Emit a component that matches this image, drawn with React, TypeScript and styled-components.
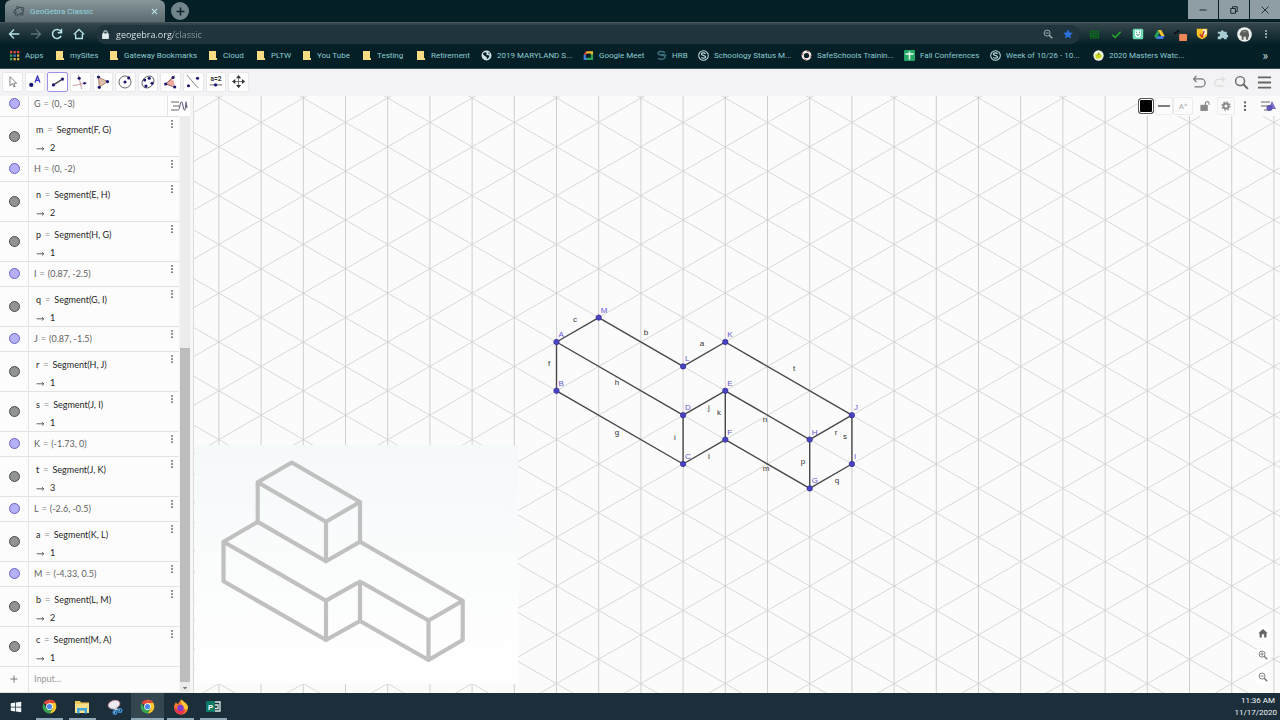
import React from "react";
import styled, { createGlobalStyle } from "styled-components";

const GlobalStyle = createGlobalStyle`
  *, *::before, *::after { box-sizing: border-box; }
  body { margin: 0; font-family: Roboto, "Noto Sans", sans-serif; background: #fbfbfb; }
  button, input { font: inherit; color: inherit; border: 0; padding: 0; margin: 0; background: none; }
  ul { list-style: none; margin: 0; padding: 0; }
  a { color: inherit; text-decoration: none; }
  svg { display: block; flex: none; }
`;

const ink = {
  chrome: "#041f26",
  cyan: "#8fcbd3",
  purple: "#6557d2",
  grey: "#666666",
};

const Page = styled.div`
  display: flex;
  flex-direction: column;
  height: 100vh;
  overflow: hidden;
`;

/* ---------- browser frame ---------- */

const TitleBar = styled.header`
  display: flex;
  align-items: flex-end;
  height: 22px;
  padding-left: 5px;
  background: ${ink.chrome};
`;

const BrowserTab = styled.div`
  display: flex;
  align-items: center;
  gap: 5px;
  width: 160px;
  height: 22px;
  padding: 0 7px 0 8px;
  border-radius: 6px 6px 0 0;
  background: linear-gradient(#88979a, #5b6a6f);
  color: #8fd5e0;
  font-size: 8px;
`;

const TabTitle = styled.span`
  flex: 1;
`;

const PlainButton = styled.button`
  display: grid;
  place-items: center;
`;

const NewTab = styled(PlainButton)`
  align-self: center;
  width: 18px;
  height: 18px;
  margin-left: 6px;
  border-radius: 50%;
  background: #72858a;
`;

const WindowControls = styled.div`
  display: flex;
  align-self: flex-start;
  gap: 1px;
  margin-left: auto;
`;

const WindowButton = styled(PlainButton)`
  width: 30px;
  height: 19px;
  background: #8f9ea2;
`;

const NavBar = styled.nav`
  display: flex;
  align-items: center;
  height: 23px;
  padding: 0 3px;
  border-top: 1px solid #46575d;
  background: linear-gradient(#35464c, ${ink.chrome});
`;

const NavButtons = styled.div<{ $width: number }>`
  display: grid;
  grid-auto-flow: column;
  grid-auto-columns: 1fr;
  width: ${(p) => p.$width}px;
`;

const Omnibox = styled.div`
  display: flex;
  flex: 1;
  align-items: center;
  gap: 6px;
  height: 19px;
  margin: 0 4px 0 6px;
  padding: 0 7px 0 5px;
  border-radius: 10px;
  background: #1f343c;
`;

const Address = styled.input`
  flex: 1;
  min-width: 0;
  outline: 0;
  font-family: "Open Sans", "Noto Sans", sans-serif;
  font-size: 9px;
  background: linear-gradient(90deg, #e8f1f3 57px, #8b9da2 57px);
  background-clip: text;
  color: transparent;
`;

const OmniIcons = styled.div`
  display: flex;
  gap: 10px;
`;

const Bookmarks = styled.ul`
  display: flex;
  align-items: center;
  height: 24px;
  padding: 0 12px 2px 9px;
  border-bottom: 1px solid #3a4d53;
  background: ${ink.chrome};
  color: ${ink.cyan};
  font-size: 8px;
`;

const BookmarkItem = styled.li<{ $width: number }>`
  width: ${(p) => p.$width}px;
  white-space: nowrap;
`;

const BookmarkLink = styled.a`
  display: flex;
  align-items: center;
  gap: 5px;
`;

const OverflowItem = styled.li`
  margin-left: auto;
  color: #c8dadd;
  font-size: 12px;
  line-height: 16px;
`;

/* ---------- GeoGebra toolbar ---------- */

const ToolBar = styled.div`
  display: flex;
  align-items: center;
  height: 27px;
  padding: 0 8px 1px 2px;
  background: #f3f2f4;
`;

const Tools = styled.div`
  display: grid;
  grid-template-columns: repeat(11, 1fr);
  gap: 2px;
  width: 247px;
`;

const Tool = styled(PlainButton)<{ $active?: boolean }>`
  height: 20px;
  border: 1px solid ${(p) => (p.$active ? "#9a92e6" : "#e8e8ea")};
  border-radius: 2px;
  background: #fff;
`;

const ToolActions = styled.div`
  display: flex;
  align-items: center;
  gap: 8px;
  margin-left: auto;
`;

/* ---------- algebra view ---------- */

const Workspace = styled.main`
  display: flex;
  flex: 1;
  min-height: 0;
`;

const Sidebar = styled.aside`
  position: relative;
  display: flex;
  width: 194px;
  flex: none;
  border-right: 1px solid #dcdcdc;
  background: #f6f6f6;
`;

const AlgebraList = styled.ul`
  display: flex;
  flex: 1;
  flex-direction: column;
  justify-content: flex-end;
  overflow: hidden;
  background: #fcfcfc;
  font-family: Lato, sans-serif;
`;

const Row = styled.li<{ $tall?: boolean }>`
  display: grid;
  grid-template-columns: 29px 1fr 14px;
  flex: none;
  height: ${(p) => (p.$tall ? 40 : 25)}px;
  border-bottom: 1px solid #e2e2e2;
`;

const InputRow = styled(Row)`
  height: 26px;
  align-items: center;
`;

const MarbleCell = styled.div`
  display: grid;
  place-items: center;
  align-self: stretch;
  padding-bottom: 2px;
  border-right: 1px solid #e4e4e4;
  color: ${ink.grey};
`;

const Marble = styled.button<{ $point?: boolean }>`
  width: 11px;
  height: 11px;
  border: 1px solid ${(p) => (p.$point ? "#6c62c4" : "#4c4c4c")};
  border-radius: 50%;
  background: ${(p) => (p.$point ? "#b5b0f8" : "#929494")};
`;

const PointText = styled.div`
  padding-left: 5px;
  color: #626262;
  font-size: 9px;
  line-height: 24px;
`;

const SegmentText = styled.div`
  padding: 4px 0 0 7px;
  color: #262626;
  font-size: 9px;
  line-height: 18px;
`;

const Line = styled.div<{ $gap: number }>`
  display: flex;
  align-items: center;
  gap: ${(p) => p.$gap}px;
`;

const Equals = styled.span`
  color: #808080;
`;

const MoreButton = styled(PlainButton)`
  place-items: start center;
  padding-top: 2px;
`;

const Entry = styled.input`
  min-width: 0;
  padding: 0 0 2px 5px;
  outline: 0;
  font-size: 9px;
  &::placeholder { color: #999; opacity: 1; }
`;

const ScrollTrack = styled.div`
  display: flex;
  flex-direction: column;
  width: 10px;
  margin: 20px 3px 0 1px;
  background: #ececec;
`;

const ScrollSpace = styled.div`
  flex: 232;
`;

const ScrollThumb = styled.div`
  flex: 334;
  background: #bdbdbd;
`;

const ScrollArrow = styled(PlainButton)`
  height: 11px;
`;

const ViewToggle = styled(PlainButton)`
  position: absolute;
  top: 0;
  right: 3px;
  width: 23px;
  height: 20px;
  border-left: 1px solid #e4e4e4;
  background: #fff;
`;

/* ---------- graphics view ---------- */

const Graphics = styled.section`
  position: relative;
  flex: 1;
  min-width: 0;
  overflow: hidden;
  background: #fbfbfb;
`;

const Plane = styled.svg`
  position: absolute;
  inset: 0;
  width: 100%;
  height: 100%;
  font-family: "Liberation Sans", Arial, sans-serif;
  font-size: 8px;
`;

const Sheet = styled.figure`
  position: absolute;
  left: 1px;
  bottom: 9px;
  width: 323px;
  height: 239px;
  margin: 0;
  background: linear-gradient(#f5f9fa, #fefefe 85%);
`;

const StyleBar = styled.div`
  position: absolute;
  top: 0;
  right: 0;
  display: flex;
  align-items: center;
  height: 20px;
  background: #fbfbfb;
`;

const StyleButton = styled(PlainButton)<{ $width: number; $boxed?: boolean }>`
  width: ${(p) => p.$width}px;
  height: 18px;
  border: ${(p) => (p.$boxed ? "1px solid #ececec" : "0")};
  border-radius: 2px;
  color: #aaa;
  font-size: 8px;
`;

const Swatch = styled.span`
  width: 16px;
  height: 16px;
  border: 1px solid #555;
  border-radius: 3px;
  background: #000;
  box-shadow: inset 0 0 0 1px #fff;
`;

const ZoomButtons = styled.div`
  position: absolute;
  right: 9px;
  bottom: 8px;
  display: flex;
  flex-direction: column;
  gap: 6px;
`;

const RoundButton = styled(PlainButton)`
  width: 16px;
  height: 16px;
  border-radius: 50%;
  background: #fff;
`;

/* ---------- Windows task bar ---------- */

const TaskBar = styled.footer`
  display: flex;
  align-items: stretch;
  height: 27px;
  flex: none;
  background: #1b2e3a;
`;

const TaskButtons = styled.div`
  display: grid;
  grid-template-columns: repeat(7, 1fr);
  width: 230px;
`;

const TaskButton = styled(PlainButton)<{ $open?: boolean; $active?: boolean }>`
  position: relative;
  background: ${(p) => (p.$active ? "#34464f" : "transparent")};
  &::after {
    content: "";
    position: absolute;
    left: ${(p) => (p.$active ? 0 : 3)}px;
    right: ${(p) => (p.$active ? 0 : 3)}px;
    bottom: 0;
    height: 2px;
    background: ${(p) => (p.$open ? "#8fa9b8" : "transparent")};
  }
`;

const Clock = styled.time`
  display: flex;
  flex-direction: column;
  justify-content: center;
  align-items: flex-end;
  margin-left: auto;
  padding-right: 3px;
  color: #f4f7f8;
  font-size: 8px;
  line-height: 12px;
`;

const ClockTime = styled.span`
  padding-right: 2px;
`;

/* ---------- icons ---------- */

type GlyphProps = {
  size?: number;
  box?: number;
  color?: string;
  stroke?: number;
  children: React.ReactNode;
};

const Glyph = ({ size = 12, box = 16, color = "currentColor", stroke = 1.5, children }: GlyphProps) => (
  <svg width={size} height={size} viewBox={`0 0 ${box} ${box}`} fill="none" stroke={color} strokeWidth={stroke} aria-hidden="true">
    {children}
  </svg>
);

const Dots = ({ color = "#777", size = 12 }: { color?: string; size?: number }) => (
  <Glyph size={size}>
    <g fill={color} stroke="none">
      <rect x="6.5" y="1.5" width="3" height="3" rx="1" />
      <rect x="6.5" y="6.5" width="3" height="3" rx="1" />
      <rect x="6.5" y="11.5" width="3" height="3" rx="1" />
    </g>
  </Glyph>
);

const Lens = ({ color, size = 11, sign }: { color: string; size?: number; sign: "plus" | "minus" | "none" }) => (
  <Glyph size={size} color={color}>
    <circle cx="6.5" cy="6.5" r="4.8" />
    <path d="M10 10l4.8 4.8" strokeWidth="2.2" />
    {sign !== "none" && <path d={sign === "plus" ? "M4 6.5h5M6.5 4v5" : "M4 6.5h5"} />}
  </Glyph>
);

const Folder = () => (
  <svg width="10" height="11" viewBox="0 0 10 11" aria-hidden="true">
    <path d="M1 1h7v7h1v2H1z" fill="#f8dc83" />
  </svg>
);

const AppsGrid = () => (
  <svg width="11" height="11" viewBox="0 0 11 11" aria-hidden="true">
    {["#d8503c", "#d8503c", "#d8503c", "#3fa05a", "#3f7fd0", "#d8a53c", "#3fa05a", "#e0b040", "#e0b040"].map((c, i) => (
      <rect key={i} x={1 + (i % 3) * 3.5} y={1 + Math.floor(i / 3) * 3.5} width="2.3" height="2.3" fill={c} />
    ))}
  </svg>
);

const GlobeIcon = () => (
  <svg width="11" height="11" viewBox="0 0 16 16" aria-hidden="true">
    <circle cx="8" cy="8" r="7.2" fill="#cfe0e3" />
    <path d="M3 5c2-2 4-2 5-1s-1 2 0 3 3 0 4 1-1 4-3 5c-1-1 0-2-1-3S3 8 3 5zM11 3l2 2-2 1z" fill={ink.chrome} />
  </svg>
);

const MeetIcon = () => (
  <svg width="11" height="11" viewBox="0 0 16 16" fill="none" strokeWidth="3.2" aria-hidden="true">
    <path d="M2.5 6.5V13H6" stroke="#3f7fe0" />
    <path d="M2.5 6.500L6 3" stroke="#e0483c" />
    <path d="M5 3.500h8V7" stroke="#eebb30" />
    <path d="M5.500 13H13V6.500" stroke="#2ca352" />
  </svg>
);

const HrbIcon = () => (
  <Glyph size={11} color="#3f7080" stroke={2}>
    <path d="M13 4C10 1 3 2 3 5s9 2 10 5-6 5-10 2M6 7c4-1 8 0 9 2" />
  </Glyph>
);

const SchoologyIcon = () => (
  <Glyph size={11} color="#c6dde0" stroke={1.5}>
    <circle cx="8" cy="8" r="7" />
    <path d="M11 5.500C9.500 3.500 5 3.800 5 6s6 1.800 6 4-4.500 2.500-6 .6" strokeWidth="1.8" />
  </Glyph>
);

const SafeIcon = () => (
  <svg width="11" height="11" viewBox="0 0 16 16" fill="none" aria-hidden="true">
    <circle cx="8" cy="8" r="5.5" stroke="#f4e9e6" strokeWidth="3.4" />
    <circle cx="8" cy="8" r="6" stroke="#a0493f" strokeWidth="1.4" strokeDasharray="3 6.4" />
  </svg>
);

const SheetsIcon = () => (
  <svg width="11" height="11" viewBox="0 0 11 11" aria-hidden="true">
    <rect width="11" height="11" rx="1" fill="#22a565" />
    <path d="M5.5 1.5v8M1.5 4h8" stroke="#e9fff2" strokeWidth="1.6" />
  </svg>
);

const MastersIcon = () => (
  <svg width="11" height="11" viewBox="0 0 16 16" aria-hidden="true">
    <circle cx="8" cy="8" r="7.5" fill="#f2f4e8" />
    <path d="M3 7l4-2 5 1 1 4-5 3-4-1z" fill="#c9d81e" />
    <path d="M8 3l2 3-3 2z" fill="#7b8f2b" />
  </svg>
);

const bookmarks: { label: string; width: number; icon: React.ReactNode }[] = [
  { label: "Apps", width: 46, icon: <AppsGrid /> },
  { label: "mySites", width: 54, icon: <Folder /> },
  { label: "Gateway Bookmarks", width: 99, icon: <Folder /> },
  { label: "Cloud", width: 48, icon: <Folder /> },
  { label: "PLTW", width: 46, icon: <Folder /> },
  { label: "You Tube", width: 60, icon: <Folder /> },
  { label: "Testing", width: 54, icon: <Folder /> },
  { label: "Retirement", width: 65, icon: <Folder /> },
  { label: "2019 MARYLAND S...", width: 102, icon: <GlobeIcon /> },
  { label: "Google Meet", width: 73, icon: <MeetIcon /> },
  { label: "HRB", width: 42, icon: <HrbIcon /> },
  { label: "Schoology Status M...", width: 103, icon: <SchoologyIcon /> },
  { label: "SafeSchools Trainin...", width: 103, icon: <SafeIcon /> },
  { label: "Fall Conferences", width: 86, icon: <SheetsIcon /> },
  { label: "Week of 10/26 - 10...", width: 103, icon: <SchoologyIcon /> },
  { label: "2020 Masters Watc...", width: 110, icon: <MastersIcon /> },
];

const Dot = ({ x, y, r = 1.9 }: { x: number; y: number; r?: number }) => (
  <circle cx={x} cy={y} r={r} fill="#1a1670" stroke="none" />
);

const tools: { name: string; art: React.ReactNode }[] = [
  { name: "Move", art: <path d="M6 2v11l3-2.5 1.8 4 1.5-.7-1.7-3.8h3.6z" stroke="#777" strokeWidth="1.1" /> },
  {
    name: "Point",
    art: (
      <>
        <Dot x={4} y={12} r={2.6} />
        <path d="M8.5 9L11.5 1.5 14.5 9M9.5 6.500h4" stroke="#3a37c8" strokeWidth="1.7" />
      </>
    ),
  },
  { name: "Segment", art: <><path d="M3 12L14 5" stroke="#444" /><Dot x={3} y={12} /><Dot x={14} y={5} /></> },
  {
    name: "Perpendicular line",
    art: (
      <>
        <path d="M0 13L17 9.500M6.500 0l4 17" stroke="#c79a98" strokeWidth="1.2" />
        <Dot x={7.5} y={4} />
        <Dot x={14} y={10} r={1.5} />
      </>
    ),
  },
  {
    name: "Polygon",
    art: (
      <>
        <path d="M3 2.5L14 8 4 15z" fill="#dcc0ae" stroke="#a8705c" strokeWidth="1" />
        <Dot x={3} y={2.5} /><Dot x={14} y={8} /><Dot x={4} y={15} />
      </>
    ),
  },
  { name: "Circle", art: <><circle cx="8.500" cy="8.500" r="7.300" stroke="#555" strokeWidth="1.1" /><Dot x={8.5} y={8.5} /><Dot x={13} y={3.500} /></> },
  {
    name: "Ellipse",
    art: (
      <>
        <ellipse cx="8.500" cy="8.500" rx="8" ry="6.400" transform="rotate(-45 8.500 8.500)" stroke="#555" strokeWidth="1.1" />
        <Dot x={4.5} y={6} /><Dot x={10} y={4} /><Dot x={6} y={13.500} /><Dot x={13.5} y={10} />
      </>
    ),
  },
  {
    name: "Angle",
    art: (
      <>
        <path d="M2 11L9 4a10 10 0 0 1 3.500 9.500z" fill="#eda99b" stroke="none" />
        <path d="M13 1L2 11l12 4" stroke="#7a4a4a" strokeWidth="1.1" />
        <Dot x={11} y={3} /><Dot x={2} y={11} /><Dot x={13} y={14.5} />
      </>
    ),
  },
  { name: "Reflect about line", art: <><path d="M1 0l14 16" stroke="#777" strokeWidth="1.1" /><Dot x={3} y={13} /><Dot x={14} y={4} /></> },
  {
    name: "Slider",
    art: (
      <>
        <path d="M1 12h15" stroke="#666" strokeWidth="1.2" />
        <Dot x={8} y={12} />
        <text x="8.5" y="7" textAnchor="middle" fontSize="8" fontWeight="700" fill="#333" stroke="none">a=2</text>
      </>
    ),
  },
  {
    name: "Move graphics view",
    art: (
      <>
        <path d="M8 2v12M2 8h12" stroke="#666" strokeWidth="1.1" />
        <path d="M8 0l3 4H5zM8 16l3-4H5zM0 8l4-3v6zM16 8l-4-3v6z" fill="#333" stroke="none" />
      </>
    ),
  },
];

/* ---------- construction data ---------- */

type AlgebraRow = { name: string; value: string; result?: string };

const algebra: AlgebraRow[] = [
  { name: "G", value: "(0, -3)" },
  { name: "m", value: "Segment(F, G)", result: "2" },
  { name: "H", value: "(0, -2)" },
  { name: "n", value: "Segment(E, H)", result: "2" },
  { name: "p", value: "Segment(H, G)", result: "1" },
  { name: "I", value: "(0.87, -2.5)" },
  { name: "q", value: "Segment(G, I)", result: "1" },
  { name: "J", value: "(0.87, -1.5)" },
  { name: "r", value: "Segment(H, J)", result: "1" },
  { name: "s", value: "Segment(J, I)", result: "1" },
  { name: "K", value: "(-1.73, 0)" },
  { name: "t", value: "Segment(J, K)", result: "3" },
  { name: "L", value: "(-2.6, -0.5)" },
  { name: "a", value: "Segment(K, L)", result: "1" },
  { name: "M", value: "(-4.33, 0.5)" },
  { name: "b", value: "Segment(L, M)", result: "2" },
  { name: "c", value: "Segment(M, A)", result: "1" },
];

const UNIT = 48.8;
const COLUMN = 42.2;
const ORIGIN = { x: 615.7, y: 246 };

// Points are stored as [grid column, height in units].
const points: Record<string, [number, number]> = {
  A: [-6, 0], B: [-6, -1], C: [-3, -2.5], D: [-3, -1.5], E: [-2, -1], F: [-2, -2],
  G: [0, -3], H: [0, -2], I: [1, -2.5], J: [1, -1.5], K: [-2, 0], L: [-3, -0.5], M: [-5, 0.5],
};

// [label, start, end, label x, label y]
const segments: [string, string, string, number, number][] = [
  ["c", "M", "A", 381, 226], ["b", "L", "M", 452, 239], ["a", "K", "L", 508, 250], ["t", "J", "K", 600, 275],
  ["f", "A", "B", 355, 270], ["h", "A", "D", 423, 289], ["g", "B", "C", 423, 339], ["i", "D", "C", 481, 344],
  ["j", "D", "E", 515, 314], ["k", "E", "F", 525, 319], ["l", "C", "F", 515, 363], ["n", "E", "H", 571, 326],
  ["m", "F", "G", 572, 375], ["p", "H", "G", 609, 368], ["q", "G", "I", 643, 387], ["r", "H", "J", 642, 339],
  ["s", "J", "I", 651, 343],
];

const at = (id: string) => ({
  x: ORIGIN.x + points[id][0] * COLUMN,
  y: ORIGIN.y - points[id][1] * UNIT,
});

const columns = Array.from({ length: 62 }, (_, i) => i - 15);
const diagonals = Array.from({ length: 80 }, (_, i) => i - 35);
const reach = 50;

const verticalPath = columns.map((c) => `M${ORIGIN.x + c * COLUMN} 0V2000`).join("");

const diagonalPath = diagonals
  .map((d) => {
    const y = ORIGIN.y + d * UNIT;
    const x1 = ORIGIN.x - 16 * COLUMN;
    const x2 = ORIGIN.x + reach * COLUMN;
    return (
      `M${x1} ${y - 8 * UNIT}L${x2} ${y + (reach / 2) * UNIT}` +
      `M${x1} ${y + 8 * UNIT}L${x2} ${y - (reach / 2) * UNIT}`
    );
  })
  .join("");

const GeoPlane = () => (
  <Plane role="img" aria-label="Isometric construction">
    <path d={diagonalPath} stroke="#d8d8d8" strokeWidth="1" fill="none" />
    <path d={verticalPath} stroke="#cfcfcf" strokeWidth="1" fill="none" />
    {segments.map(([id, a, b]) => (
      <line key={id} x1={at(a).x} y1={at(a).y} x2={at(b).x} y2={at(b).y} stroke="#4a4a4a" strokeWidth="1.4" />
    ))}
    {Object.keys(points).map((id) => (
      <g key={id}>
        <circle cx={at(id).x} cy={at(id).y} r="2.7" fill="#4a43c4" stroke="#2f2a8c" strokeWidth="0.7" />
        <text x={at(id).x + 2} y={at(id).y - 5} fill={ink.purple}>{id}</text>
      </g>
    ))}
    {segments.map(([id, , , x, y]) => (
      <text key={id} x={x} y={y} textAnchor="middle" fill="#333">{id}</text>
    ))}
  </Plane>
);

const BlockDrawing = () => (
  <svg width="323" height="239" viewBox="195 445 323 239" fill="none" stroke="#c0c0c0" strokeWidth="4.2" strokeLinejoin="round" strokeLinecap="round" role="img" aria-label="Target solid">
    <path d="M257.7 482.3L291.7 462.5 360 502 326 521.7zM257.7 482.3V521.9L326 561.3V521.7M326 561.3L360 541.7V502" />
    <path d="M257.7 521.9L223.5 541.7V581.3L326 640V600.7L223.5 541.7M326 600.7L360 581.5 428.5 620.5 462.7 600.8 360 541.7M326 640L360 621V581.5M360 621L428.5 660V620.5M428.5 660L462.7 640V600.8" />
  </svg>
);

/* ---------- larger pieces ---------- */

const ChromeLogo = () => (
  <svg width="15" height="15" viewBox="0 0 24 24" aria-hidden="true">
    <path d="M12 12L2.5 6.5A11 11 0 0 1 21.5 6.5z" fill="#e2453a" />
    <path d="M12 12V1a11 11 0 0 1 9.5 5.5A11 11 0 0 1 12 23l5-8z" fill="#f7c72c" />
    <path d="M12 1A11 11 0 0 1 21.5 6.5H12z" fill="#e2453a" />
    <path d="M12 12l5 3-5 8A11 11 0 0 1 2.5 6.5L7 15z" fill="#36a552" />
    <circle cx="12" cy="12" r="5.4" fill="#fff" />
    <circle cx="12" cy="12" r="4.2" fill="#4a86ee" />
  </svg>
);

const BrowserFrame = () => (
  <>
    <TitleBar>
      <BrowserTab>
        <Glyph size={12} color="#34444a" stroke={1.2}>
          <ellipse cx="8" cy="8" rx="6" ry="4.5" transform="rotate(-20 8 8)" />
          <g fill="#78878b">
            <circle cx="2.5" cy="9" r="1.6" /><circle cx="6" cy="3.5" r="1.6" /><circle cx="13" cy="5" r="1.6" />
            <circle cx="12" cy="12" r="1.6" /><circle cx="5" cy="13" r="1.6" />
          </g>
        </Glyph>
        <TabTitle>GeoGebra Classic</TabTitle>
        <PlainButton aria-label="Close tab">
          <Glyph size={7} color="#bfe6ea" stroke={2.4}><path d="M2 2l12 12M14 2L2 14" /></Glyph>
        </PlainButton>
      </BrowserTab>
      <NewTab aria-label="New tab">
        <Glyph size={9} color="#0b2228" stroke={2.6}><path d="M8 1v14M1 8h14" /></Glyph>
      </NewTab>
      <WindowControls>
        <WindowButton aria-label="Minimize"><Glyph size={8} color="#1b2a2f" stroke={2}><path d="M1 8h14" /></Glyph></WindowButton>
        <WindowButton aria-label="Restore"><Glyph size={8} color="#1b2a2f" stroke={2}><path d="M1.5 5h9.5v9.5H1.5zM5 5V1.5h9.5V11H11" /></Glyph></WindowButton>
        <WindowButton aria-label="Close window"><Glyph size={8} color="#1b2a2f" stroke={1.8}><path d="M1 1l14 14M15 1L1 15" /></Glyph></WindowButton>
      </WindowControls>
    </TitleBar>

    <NavBar>
      <NavButtons $width={87}>
        <PlainButton aria-label="Back"><Glyph size={12} color="#b4e2e8" stroke={1.8}><path d="M15 8H2.5M8 2L2 8l6 6" /></Glyph></PlainButton>
        <PlainButton aria-label="Forward"><Glyph size={12} color="#5b7077" stroke={1.8}><path d="M1 8h12.5M8 2l6 6-6 6" /></Glyph></PlainButton>
        <PlainButton aria-label="Reload"><Glyph size={12} color="#b4e2e8" stroke={2}><path d="M13.5 10.5A6 6 0 1 1 12.5 4L14 6M14 1v5.3H9" /></Glyph></PlainButton>
        <PlainButton aria-label="Home"><Glyph size={12} color="#b4e2e8" stroke={1.8}><path d="M1 8.5L8 2l7 6.5M3.5 7.5V14h9V7.5" /></Glyph></PlainButton>
      </NavButtons>
      <Omnibox>
        <Glyph size={9} color="#e2ecee" stroke={1.8}>
          <rect x="3" y="7" width="10" height="8" fill="#e2ecee" /><path d="M5 7V4.5a3 3 0 0 1 6 0V7" />
        </Glyph>
        <Address aria-label="Address" defaultValue="geogebra.org/classic" />
        <OmniIcons>
          <PlainButton aria-label="Zoom"><Lens color="#9fb2b6" sign="minus" size={10} /></PlainButton>
          <PlainButton aria-label="Bookmark this page">
            <Glyph size={10}><path d="M8 .5l2.3 5 5.4.6-4 3.7 1.1 5.400L8 12.5l-4.800 2.7 1.1-5.400-4-3.7 5.400-.6z" fill="#2a72e0" stroke="none" /></Glyph>
          </PlainButton>
        </OmniIcons>
      </Omnibox>
      <NavButtons $width={193}>
        <PlainButton aria-label="Sheet extension">
          <Glyph size={11} color="#0f6a1c" stroke={1.6}><path d="M2 3h12v10H2zM2 6.5h12M2 10h12M6 3v10M10 3v10" /></Glyph>
        </PlainButton>
        <PlainButton aria-label="Check extension"><Glyph size={11} color="#22b422" stroke={2}><path d="M2 8.5L6 12.5 14 4" /></Glyph></PlainButton>
        <PlainButton aria-label="Bitmoji extension">
          <Glyph size={12}>
            <rect x="1" y="1" width="14" height="14" rx="2" fill="#6fdcb4" stroke="none" />
            <path d="M4 3h8v7l-2 2.5H6L4 10z" fill="#f0fffa" stroke="none" />
            <path d="M6 8c1 2.5 3 2.5 4 0M6 5v1.5M10 5v1.5" stroke="#2f8a6c" strokeWidth="1.2" />
          </Glyph>
        </PlainButton>
        <PlainButton aria-label="Drive extension">
          <Glyph size={11}>
            <g stroke="none"><path d="M5.5 1.5L8 6 3 14.5.5 10z" fill="#27a35a" /><path d="M5.5 1.5h5l5 8.5h-5z" fill="#f4c430" /><path d="M5.5 10h10L13 14.5H3z" fill="#3d79e2" /></g>
          </Glyph>
        </PlainButton>
        <PlainButton aria-label="Pen extension">
          <Glyph size={14}><path d="M1 8l6-4" stroke="#0b0f10" strokeWidth="2" /><rect x="7" y="8" width="9" height="8" rx="1" fill="#ee8656" stroke="none" /></Glyph>
        </PlainButton>
        <PlainButton aria-label="Shield extension">
          <Glyph size={12}>
            <path d="M1 1h14v7c0 4-4 6-7 7-3-1-7-3-7-7z" fill="#f6c228" stroke="none" />
            <path d="M9 2h5v5l-4 4z" fill="#fff" stroke="none" /><path d="M5 8l3 4 3-8" stroke="#c0392b" strokeWidth="2" />
          </Glyph>
        </PlainButton>
        <PlainButton aria-label="Extensions">
          <Glyph size={12}>
            <path d="M1 5h4a2 2 0 1 1 4 0h4v3.5a2 2 0 1 1 0 4V15H9.5a2 2 0 1 0-4 0H1v-4a2 2 0 1 0 0-3.5z" fill="#a5cdd3" stroke="none" />
          </Glyph>
        </PlainButton>
        <PlainButton aria-label="Profile">
          <Glyph size={15}>
            <circle cx="8" cy="8" r="7.8" fill="#eef0ef" stroke="none" />
            <path d="M4 5c1-2 6-3 8-.5l1 4-1.5 5H9.5v-3H7v3H5V10L2.5 8z" fill="#5d5f5c" stroke="none" />
            <path d="M6 5h4" stroke="#8f9a93" strokeWidth="1.2" />
          </Glyph>
        </PlainButton>
        <PlainButton aria-label="Browser menu"><Dots color="#a9c2c6" size={10} /></PlainButton>
      </NavButtons>
    </NavBar>

    <Bookmarks>
      {bookmarks.map((b) => (
        <BookmarkItem key={b.label} $width={b.width}>
          <BookmarkLink href="#">{b.icon}{b.label}</BookmarkLink>
        </BookmarkItem>
      ))}
      <OverflowItem><PlainButton aria-label="More bookmarks">»</PlainButton></OverflowItem>
    </Bookmarks>
  </>
);

const AlgebraView = () => (
  <Sidebar>
    <AlgebraList>
      {algebra.map((row) => (
        <Row key={row.name} $tall={!!row.result}>
          <MarbleCell><Marble $point={!row.result} aria-label={`Show or hide ${row.name}`} /></MarbleCell>
          {row.result ? (
            <SegmentText>
              <Line $gap={4}><span>{row.name}</span><Equals>=</Equals><span>{row.value}</span></Line>
              <Line $gap={5}>
                <Glyph size={9} color="#555" stroke={1.6}><path d="M1 8.5h13M10.5 5.5L14 8.5l-3.5 3" /></Glyph>
                <span>{row.result}</span>
              </Line>
            </SegmentText>
          ) : (
            <PointText>
              <Line $gap={3}><span>{row.name}</span><Equals>=</Equals><span>{row.value}</span></Line>
            </PointText>
          )}
          <MoreButton aria-label={`Options for ${row.name}`}><Dots size={10} /></MoreButton>
        </Row>
      ))}
      <InputRow>
        <MarbleCell><Glyph size={8} color="#777" stroke={2}><path d="M8 1v14M1 8h14" /></Glyph></MarbleCell>
        <Entry aria-label="Algebra input" placeholder="Input..." />
      </InputRow>
    </AlgebraList>
    <ScrollTrack>
      <ScrollSpace />
      <ScrollThumb />
      <ScrollArrow aria-label="Scroll down"><Glyph size={6}><path d="M2 5h12l-6 7z" fill="#777" stroke="none" /></Glyph></ScrollArrow>
    </ScrollTrack>
    <ViewToggle aria-label="Algebra view settings">
      <svg width="17" height="12" viewBox="0 0 17 12" fill="none" stroke="#666" strokeWidth="1.2" aria-hidden="true">
        <path d="M0 2h8M2 6h6M0 10h8" /><path d="M8 9c1-2 1-7 2.500-7S12 10 13.500 10 14.500 4 15 1.500L16 8" stroke="#6a6a88" />
      </svg>
    </ViewToggle>
  </Sidebar>
);

const GraphicsView = () => (
  <Graphics>
    <GeoPlane />
    <Sheet><BlockDrawing /></Sheet>
    <StyleBar>
      <StyleButton $width={18} aria-label="Colour"><Swatch /></StyleButton>
      <StyleButton $width={18} $boxed aria-label="Line style"><Glyph size={12} color="#555" stroke={2}><path d="M0 8h16" /></Glyph></StyleButton>
      <StyleButton $width={20} $boxed aria-label="Label style">A^</StyleButton>
      <StyleButton $width={24} aria-label="Unlock">
        <Glyph size={10} color="#888" stroke={1.8}><rect x="1.5" y="7" width="10" height="8" fill="#888" /><path d="M8.5 7V4a3 3 0 0 1 6 0v2" /></Glyph>
      </StyleButton>
      <StyleButton $width={18} $boxed aria-label="Settings">
        <Glyph size={10} color="#888" stroke={3}><circle cx="8" cy="8" r="4" /><circle cx="8" cy="8" r="6.5" strokeDasharray="2.6 2.5" strokeWidth="2" /></Glyph>
      </StyleButton>
      <StyleButton $width={20} aria-label="More"><Dots color="#666" size={12} /></StyleButton>
      <StyleButton $width={25} aria-label="Style bar">
        <svg width="16" height="12" viewBox="0 0 16 12" aria-hidden="true">
          <path d="M1 2h9M1 6h9M4 10h6" stroke="#666" strokeWidth="1.2" />
          <path d="M12 1l4 8H8z" fill="#7a72c8" /><circle cx="9.5" cy="8" r="3" fill="#5e56b4" />
        </svg>
      </StyleButton>
    </StyleBar>
    <ZoomButtons>
      <RoundButton aria-label="Standard view">
        <Glyph size={10}><path d="M8 1.5L15.5 8.5H13.5V15H9.8V10H6.2V15H2.5V8.5H.5z" fill="#666" stroke="none" /></Glyph>
      </RoundButton>
      <RoundButton aria-label="Zoom in"><Lens color="#777" size={10} sign="plus" /></RoundButton>
      <RoundButton aria-label="Zoom out"><Lens color="#777" size={10} sign="minus" /></RoundButton>
    </ZoomButtons>
  </Graphics>
);

const WindowsTaskBar = () => (
  <TaskBar>
    <TaskButtons>
      <TaskButton aria-label="Start">
        <Glyph size={12}><path d="M1 3l6-1v5.5H1zM8 1.9L15 1v6.5H8zM1 8.5h6V14l-6-1zM8 8.5h7V15l-7-.9z" fill="#f2f6f8" stroke="none" /></Glyph>
      </TaskButton>
      <TaskButton $open aria-label="Chrome"><ChromeLogo /></TaskButton>
      <TaskButton $open aria-label="File Explorer">
        <Glyph size={16}>
          <g stroke="none"><path d="M1 2h5l1 1.5h8V14H1z" fill="#efc85a" /><path d="M1 5h14v9H1z" fill="#fbe08c" /><path d="M3 9h10v5.5h-2.5v-3h-5v3H3z" fill="#3fa9dd" /></g>
        </Glyph>
      </TaskButton>
      <TaskButton aria-label="Snipping Tool">
        <Glyph size={16}>
          <ellipse cx="7" cy="5.5" rx="6" ry="4" transform="rotate(-18 7 5.5)" fill="#eceaf0" stroke="#c98b94" strokeWidth="0.8" />
          <path d="M4 9l9 2M10 7l-3 7" stroke="#c9d4da" strokeWidth="1.3" />
          <circle cx="13" cy="11.5" r="1.8" stroke="#3b8ad0" /><circle cx="8" cy="13.5" r="1.8" stroke="#3b8ad0" />
        </Glyph>
      </TaskButton>
      <TaskButton $open $active aria-label="Chrome, GeoGebra Classic"><ChromeLogo /></TaskButton>
      <TaskButton $open aria-label="Firefox">
        <Glyph size={16}>
          <g stroke="none">
            <path d="M8 15.5A7 7 0 0 1 1 8.5C1 6 2 4.5 3 3l1 2 2-1c0-1 1-2.5 2.5-3.5C9 2 12 3 13 4.5c1.5 1.5 2 3 2 4.5a7 7 0 0 1-7 6.5z" fill="#f5792a" />
            <path d="M8.5 .5C9 2 12 3 13 4.5c1.5 1.5 2 3 2 4.5-1 2-3 2-4 0S7 5 8.5 .5z" fill="#fbc630" />
            <circle cx="7.5" cy="9" r="3.2" fill="#7a3fd0" /><path d="M1 8c2 1 3 4 7 4 2 0 3-1 4-2 0 3-2 5.5-4.5 5.5S1 12 1 8z" fill="#e8344e" />
          </g>
        </Glyph>
      </TaskButton>
      <TaskButton $open aria-label="Publisher">
        <svg width="15" height="13" viewBox="0 0 15 13" aria-hidden="true">
          <rect x="0" y="1" width="9" height="11" rx="1" fill="#0c7a66" />
          <text x="2" y="10" fontSize="8" fontWeight="700" fill="#fff">P</text>
          <path d="M9 2h5v9H9M9 5h3v3.5H9" fill="none" stroke="#d7efe9" strokeWidth="1.3" />
        </svg>
      </TaskButton>
    </TaskButtons>
    <Clock dateTime="2020-11-17T11:36"><ClockTime>11:36 AM</ClockTime><span>11/17/2020</span></Clock>
  </TaskBar>
);

export default function App() {
  return (
    <Page>
      <GlobalStyle />
      <BrowserFrame />
      <ToolBar>
        <Tools>
          {tools.map((t) => (
            <Tool key={t.name} $active={t.name === "Segment"} aria-label={t.name}>
              <Glyph size={14} box={17}>{t.art}</Glyph>
            </Tool>
          ))}
        </Tools>
        <ToolActions>
          <PlainButton aria-label="Undo"><Glyph size={14} color="#777"><path d="M5 1L2 4.5 5 8M2 4.5h8.5a4.5 4.5 0 0 1 0 9H3" /></Glyph></PlainButton>
          <PlainButton aria-label="Redo"><Glyph size={12} color="#dcdcdc"><path d="M11 1l3 3.5L11 8M14 4.5H5.5a4.5 4.5 0 0 0 0 9H13" /></Glyph></PlainButton>
          <PlainButton aria-label="Search"><Lens color="#666" size={15} sign="none" /></PlainButton>
          <PlainButton aria-label="Menu"><Glyph size={15} color="#666" stroke={2}><path d="M1 2.5h14M1 8h14M1 13.5h14" /></Glyph></PlainButton>
        </ToolActions>
      </ToolBar>
      <Workspace>
        <AlgebraView />
        <GraphicsView />
      </Workspace>
      <WindowsTaskBar />
    </Page>
  );
}
